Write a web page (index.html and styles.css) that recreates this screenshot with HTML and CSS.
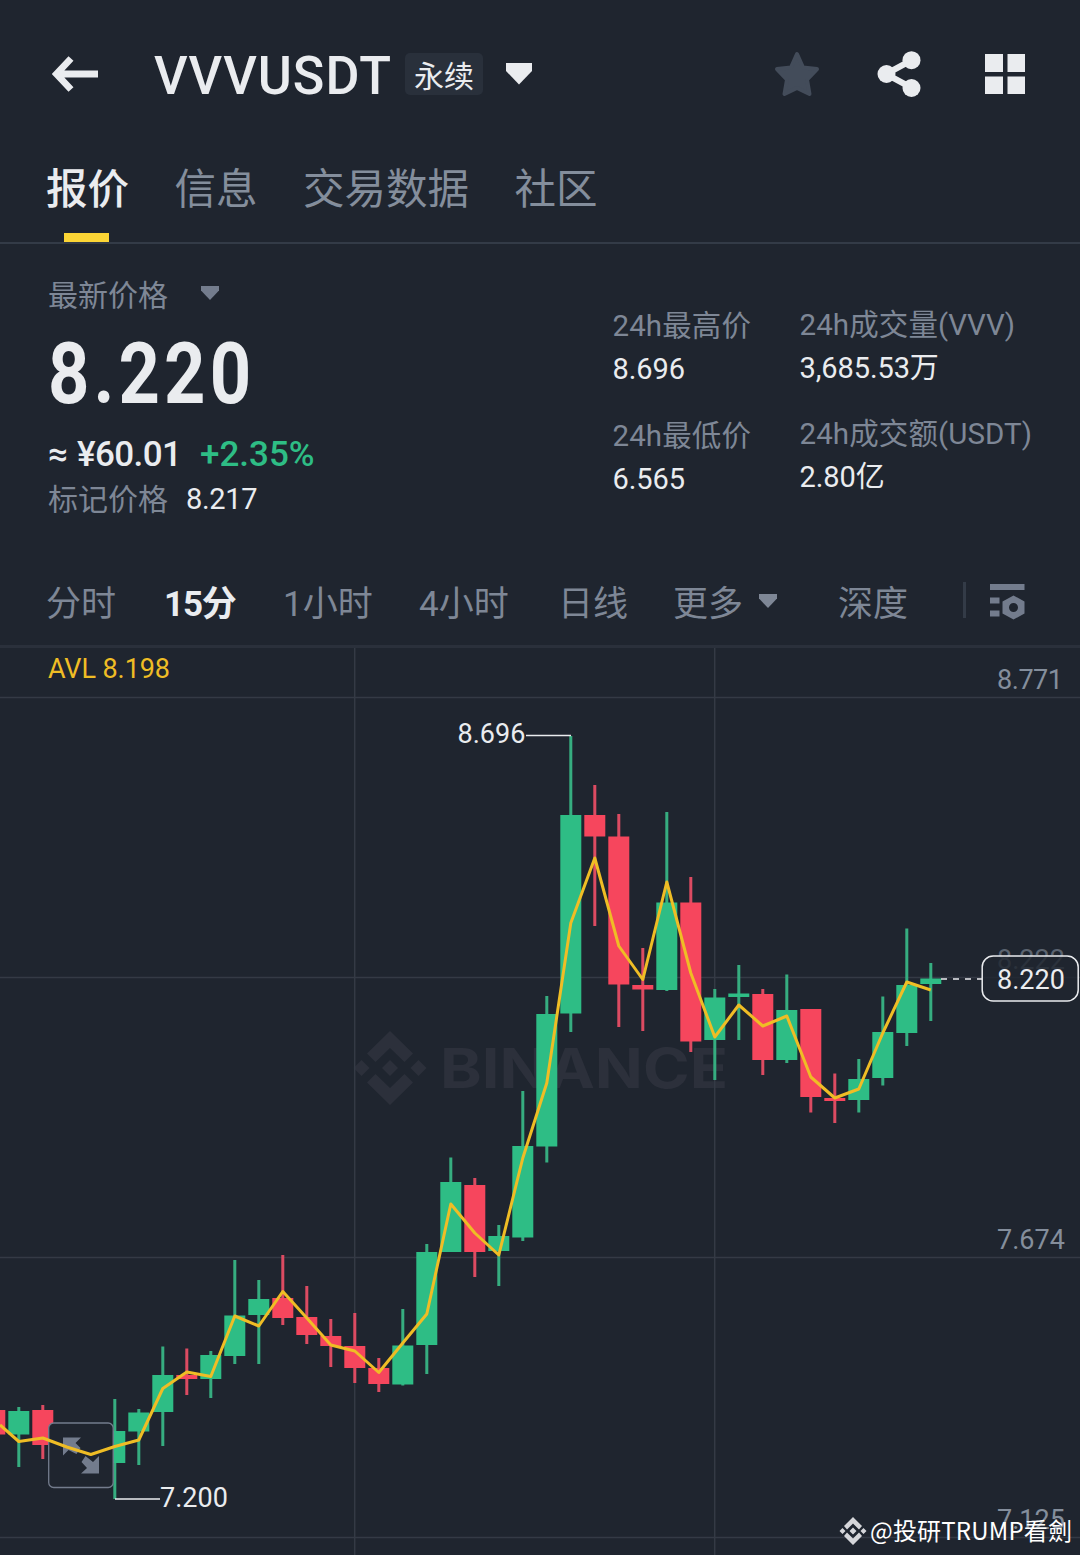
FILE: index.html
```html
<!DOCTYPE html>
<html lang="zh-CN">
<head>
<meta charset="utf-8">
<title>VVVUSDT 永续</title>
<link rel="stylesheet" href="styles.css">
</head>
<body>
<header class="header">
  <svg class="back" width="46" height="36" viewBox="0 0 46 36"><path d="M19 2.500 4.500 18 19 33.500M4 18H46" fill="none" stroke="currentColor" stroke-width="6.800"/></svg>
  <h1 class="symbol"><span>VVVUSDT</span></h1>
  <span class="badge">永续</span>
  <svg class="caret" width="28" height="22" viewBox="0 0 28 22"><path d="M1 0H27V8L14 21.500 1 8Z" fill="currentColor"/></svg>
  <div class="actions">
    <svg class="star" width="46" height="46" viewBox="0 0 46 46"><path d="M23 3 29 16.500 43 18 33 28.500 35.500 43 23 37 10.500 43 13 28.500 3 18 17 16.500Z" fill="currentColor" stroke="currentColor" stroke-width="4" stroke-linejoin="round"/></svg>
    <svg width="44" height="46" viewBox="0 0 44 46" fill="currentColor"><path d="M9 23 35 9M9 23 35 37" stroke="currentColor" stroke-width="6"/><circle cx="9.500" cy="23" r="9"/><circle cx="34.500" cy="9.200" r="9"/><circle cx="34.500" cy="37" r="9"/></svg>
    <svg width="40" height="40" viewBox="0 0 40 40"><path d="M0 0H18V18H0ZM22.500 0H40V18H22.500ZM0 22.500H18V40H0ZM22.500 22.500H40V40H22.500Z" fill="currentColor"/></svg>
  </div>
</header>

<nav class="tabs">
  <span class="tab active">报价</span>
  <span class="tab">信息</span>
  <span class="tab">交易数据</span>
  <span class="tab">社区</span>
</nav>

<section class="summary">
  <div class="quote">
    <div class="label">最新价格 <svg width="18" height="14" viewBox="0 0 18 14"><path d="M0 0H18V4.500L9 14 0 4.500Z" fill="currentColor"/></svg></div>
    <div class="price"><span class="narrow">8.220</span></div>
    <div class="fiat"><span class="approx">≈</span><span class="cny">¥60.01</span><span class="change">+2.35%</span></div>
    <div class="label mark">标记价格 <span class="value">8.217</span></div>
  </div>
  <dl class="stats">
    <div class="stat"><dt>24h最高价</dt><dd>8.696</dd></div>
    <div class="stat"><dt>24h最低价</dt><dd>6.565</dd></div>
  </dl>
  <dl class="stats volume">
    <div class="stat"><dt>24h成交量(VVV)</dt><dd>3,685.53万</dd></div>
    <div class="stat"><dt>24h成交额(USDT)</dt><dd>2.80亿</dd></div>
  </dl>
</section>

<nav class="intervals">
  <span>分时</span>
  <span class="active">15分</span>
  <span>1小时</span>
  <span>4小时</span>
  <span>日线</span>
  <span>更多<svg class="more" width="18" height="14" viewBox="0 0 18 14"><path d="M0 0H18V4.500L9 14 0 4.500Z" fill="currentColor"/></svg></span>
  <span>深度</span>
  <i class="divider"></i>
  <svg class="settings" width="36" height="38" viewBox="0 0 36 38"><path d="M1 1H35.500V7H1ZM1 14.500H10.500V20.500H1ZM1 27.500H10.500V33.500H1Z" fill="currentColor"/><path fill-rule="evenodd" d="M24.500 12.500 35.500 18.500V30.500L24.500 36.500 13.500 30.500V18.500ZM24.500 20A4.500 4.500 0 1 0 24.500 29 4.500 4.500 0 1 0 24.500 20Z" fill="currentColor"/></svg>
</nav>

<svg class="chart" width="1080" height="907" viewBox="0 648 1080 907">
  <!-- Brand watermark -->
  <g class="brand">
    <path d="M390 1031 413 1053.500 404.500 1062 390 1048 375.500 1062 367 1053.500ZM390 1105 413 1082.500 404.500 1074 390 1088 375.500 1074 367 1082.500ZM390 1060 398 1068 390 1076 382 1068ZM361.500 1060 369.500 1068 361.500 1076 353.500 1068ZM418.500 1060 426.500 1068 418.500 1076 410.500 1068Z"/>
    <text x="440" y="1088" textLength="288" lengthAdjust="spacingAndGlyphs">BINANCE</text>
  </g>
  <path class="grid" d="M0 697.500H1080M0 977.500H1080M0 1257.500H1080M0 1537.500H1080M354.700 648V1555M714.700 648V1555"/>
  <g class="axis">
    <text x="997" y="689" textLength="66">8.771</text>
    <text x="997" y="969" class="faded">8.222</text>
    <text x="997" y="1249">7.674</text>
    <text x="997" y="1529">7.125</text>
  </g>
  <!-- Candles: one column every 24px -->
  <path class="wick up" d="M18.800 1407V1467M114.800 1399V1499M138.800 1409V1465M162.800 1346.500V1446M210.800 1351V1398M234.800 1260V1364M258.800 1280V1364M402.800 1309V1385.500M426.800 1244V1374M450.800 1157.500V1252M498.800 1225V1286M522.800 1091V1241M546.800 996V1162.500M570.800 736V1032M666.800 812V991M714.800 989V1080M738.800 965V1040M786.800 974.500V1063M858.800 1059V1112.500M882.800 996.500V1085.500M906.800 928.500V1046M930.800 963V1021"/>
  <path class="wick down" d="M42.800 1405V1459M186.800 1348.500V1395M282.800 1255V1325M306.800 1286V1344M330.800 1319V1367M354.800 1313V1383M378.800 1358V1392M474.800 1178V1277M594.800 785V926M618.800 814V1027M642.800 948V1031M690.800 877V1052M762.800 989V1075M810.800 1009V1112.500M834.800 1073.500V1123"/>
  <path class="up body" d="M8.300 1411h21v23.500h-21ZM104.300 1431h21v32h-21ZM128.300 1412.500h21v19h-21ZM152.300 1375h21v37h-21ZM200.300 1355h21v24h-21ZM224.300 1315.500h21v40.500h-21ZM248.300 1299h21v16h-21ZM392.300 1345.500h21v39h-21ZM416.300 1252h21v93h-21ZM440.300 1182h21v70h-21ZM488.300 1236h21v15h-21ZM512.300 1146h21v91.500h-21ZM536.300 1014h21v132.500h-21ZM560.300 815h21v198.500h-21ZM656.300 902.500h21v87.500h-21ZM704.300 997.500h21v42.500h-21ZM728.300 993.500h21v3.500h-21ZM776.300 1010h21v50h-21ZM848.300 1079h21v21h-21ZM872.300 1032h21v46h-21ZM896.300 985h21v48h-21ZM920.300 978.500h21v5.500h-21Z"/>
  <path class="down body" d="M0 1410h5.300v24.500h-5.300ZM32.300 1410h21v35h-21ZM176.300 1375h21v4h-21ZM272.300 1298h21v20h-21ZM296.300 1317h21v18h-21ZM320.300 1336h21v10h-21ZM344.300 1346h21v22h-21ZM368.300 1368h21v16h-21ZM464.300 1185h21v67h-21ZM584.300 815h21v21.500h-21ZM608.300 836.500h21v148h-21ZM632.300 985h21v4.500h-21ZM680.300 902.500h21v139h-21ZM752.300 994h21v66h-21ZM800.300 1009h21v88h-21ZM824.300 1098h21v3h-21Z"/>
  <!-- Full-screen button -->
  <rect class="expand" x="48.700" y="1423" width="64.500" height="64.500" rx="5"/>
  <path class="arrows" d="M63 1437.500H81L75.500 1443 80.500 1448 76.500 1454 68.500 1450 63 1455.500ZM99 1473.500H81L87 1468 81.500 1462 85.500 1456 93 1462 99 1456Z"/>
  <polyline class="avl" points="0,1425 18.800,1441.500 42.800,1438 66.800,1447 90.800,1454.500 114.800,1446.500 138.800,1440 162.800,1388.500 186.800,1372 210.800,1376.500 234.800,1316 258.800,1326 282.800,1291.500 306.800,1318 330.800,1345 354.800,1351 378.800,1372.500 402.800,1343 426.800,1314 450.800,1204 474.800,1233 498.800,1255 522.800,1158 546.800,1083 570.800,923 594.800,858 618.800,946 642.800,979.500 666.800,882 690.800,973 714.800,1037 738.800,1005 762.800,1026 786.800,1016 810.800,1077 834.800,1098 858.800,1089 882.800,1033 906.800,982 930.800,990"/>
  <path class="leader" d="M526 735.500H571M115 1499H160"/>
  <path class="leader" stroke-dasharray="6 6" d="M941 979H982"/>
  <text class="avl-label" x="48" y="678" textLength="122">AVL 8.198</text>
  <text class="extreme" x="457.500" y="742.500">8.696</text>
  <text class="extreme" x="160" y="1506.500">7.200</text>
  <rect class="tag" x="982.200" y="956" width="96" height="45" rx="11"/>
  <text class="extreme" x="997" y="989">8.220</text>
  <!-- Author credit -->
  <g class="credit">
    <path d="M853 1517 862 1526 859 1529.500 853 1523.500 847 1529.500 844 1526ZM853 1545 862 1536 859 1532.500 853 1538.500 847 1532.500 844 1536ZM853 1527.500 856.500 1531 853 1534.500 849.500 1531ZM842.500 1528 845.500 1531 842.500 1534 839.500 1531ZM863.500 1528 866.500 1531 863.500 1534 860.500 1531Z"/>
    <text x="870" y="1540" textLength="202">@投研TRUMP看劍</text>
  </g>
</svg>
</body>
</html>
```
FILE: styles.css
```css
* { box-sizing: border-box; }

body {
  margin: 0;
  width: 1080px;
  background: #1f252f;
  color: #eaecef;
  font-family: Roboto, "Noto Sans CJK SC", sans-serif;
}

svg { display: block; flex: none; }

.header {
  display: flex;
  align-items: center;
  height: 148px;
  padding: 0 55px 0 52px;
  color: #eaecef;
}
.symbol {
  width: 238px;
  margin: 4px 0 0 56px;
  font-size: 54px;
  font-weight: 500;
  line-height: 60px;
  letter-spacing: -0.3px;
}
.symbol span {
  display: inline-block;
  letter-spacing: 1px;
  transform: scaleX(0.965);
  transform-origin: left;
}
.badge {
  width: 78px;
  height: 42px;
  margin-left: 13px;
  border-radius: 5px;
  background: #29303b;
  font-size: 30px;
  line-height: 48px;
  text-align: center;
}
.caret { margin-left: 22px; }
.actions {
  display: flex;
  align-items: center;
  margin-left: auto;
}
.actions svg:nth-child(2) { margin: 0 64px 0 57px; }
.star { color: #434c5a; }

.tabs {
  display: flex;
  gap: 45.500px;
  height: 96px;
  padding-left: 46px;
  border-bottom: 2px solid #333b47;
  color: #848e9c;
  font-size: 41.500px;
  line-height: 84px;
}
.tab { position: relative; height: 94px; font-weight: 400; }
.tab.active { color: #eaecef; font-weight: 500; }
.tab.active::after {
  content: "";
  position: absolute;
  left: 18px;
  bottom: 0;
  width: 45px;
  height: 9px;
  background: #fcd535;
}

.summary {
  display: flex;
  height: 316px;
  padding: 31px 0 0 48px;
}
.quote { width: 564.500px; }
.label {
  display: flex;
  align-items: center;
  height: 42px;
  color: #7e8796;
  font-size: 30px;
  font-weight: 400;
  line-height: 42px;
}
.label svg { margin: -7px 0 0 33px; color: #737c8d; }
.price {
  height: 112px;
  font-size: 85px;
  font-weight: 700;
  line-height: 115px;
}
.narrow {
  display: inline-block;
  transform: scaleX(0.85);
  transform-origin: left;
  letter-spacing: 4.800px;
}
.fiat {
  display: flex;
  height: 50px;
  font-size: 35px;
  font-weight: 500;
  line-height: 51px;
}
.approx { width: 29px; }
.cny { width: 123px; letter-spacing: -0.6px; }
.value { margin: -2px 0 0 18px; color: #eaecef; font-size: 29px; letter-spacing: -0.3px; }

.stats { width: 187px; margin: 29px 0 0; }
.volume { width: 270px; margin-top: 28px; }
.stat { height: 110px; }
.volume .stat { height: 109px; }
dt {
  color: #7e8796;
  font-size: 29.500px;
  font-weight: 400;
  line-height: 44px;
  white-space: nowrap;
  letter-spacing: 0.1px;
}
dd { margin: 0; font-size: 29px; line-height: 42px; white-space: nowrap; letter-spacing: -0.1px; }

.intervals {
  display: grid;
  grid-template-columns: 118px 119px 136px 139px 115px 165px 125px 26px 37px;
  align-items: center;
  height: 88px;
  padding-left: 46px;
  border-bottom: 3px solid #2a303b;
  color: #7e8796;
  font-size: 35px;
  line-height: 50px;
}
.intervals span { display: flex; align-items: center; margin-top: 5px; white-space: nowrap; }
.intervals .active { margin-top: 4px; color: #eaecef; font-weight: 700; letter-spacing: -1.2px; }
.intervals .more { margin: -9px 0 0 16px; }
.intervals .divider { width: 3px; height: 36px; margin-top: -5px; background: #333b47; }
.settings { margin-top: -1px; color: #737c8d; }

.chart { font-family: Roboto, "Noto Sans CJK SC", sans-serif; font-size: 27px; }
.brand { fill: #2c303b; }
.brand text { font-family: Inter, sans-serif; font-size: 55px; font-weight: 700; }
.grid { fill: none; stroke: #343a45; stroke-width: 1.5; }
.axis { fill: #848e9c; }
.faded { opacity: 0.6; }
.wick { fill: none; stroke-width: 3; }
.wick.up { stroke: #36ad80; }
.wick.down { stroke: #dc4b62; }
.body.up { fill: #2ebd85; }
.body.down { fill: #f6465d; }
.expand { fill: #1f252f; stroke: #737c8d; stroke-width: 1.3; }
.arrows { fill: #737c8d; }
.avl { fill: none; stroke: #efbd25; stroke-width: 3; stroke-linejoin: round; }
.avl-label { fill: #efbd25; }
.leader { fill: none; stroke: #eaecef; stroke-width: 1.5; }
.extreme { fill: #eaecef; }
.tag { fill: #1f252f; fill-opacity: 0.8; stroke: #eaecef; stroke-width: 1.5; }
.credit { fill: #d5d6da; }
.credit text { fill: #fff; font-family: "Noto Sans CJK TC", sans-serif; font-size: 24px; }
.change { color: #2ebd85; }
```
